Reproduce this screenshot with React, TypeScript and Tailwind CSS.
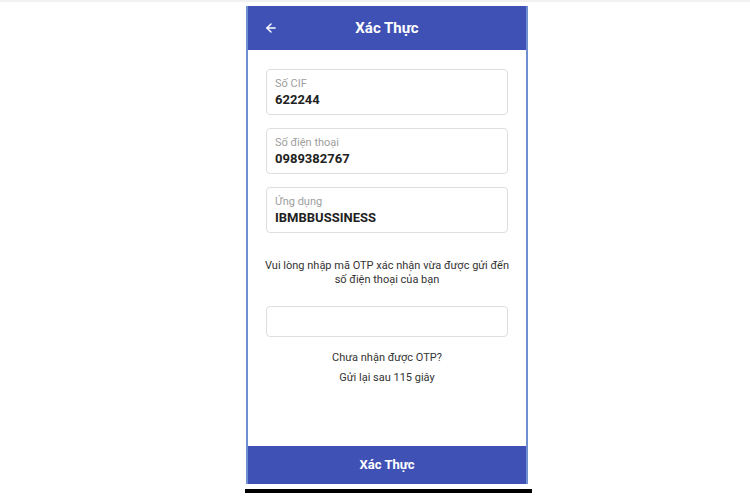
import { ArrowLeft } from "lucide-react";

const fields = [
  { label: "Số CIF", value: "622244" },
  { label: "Số điện thoại", value: "0989382767" },
  { label: "Ứng dụng", value: "IBMBBUSSINESS" },
];

export default function App() {
  return (
    <div className="h-[500px] w-[750px] overflow-hidden bg-white font-['Roboto',sans-serif]">
      <div className="h-[2px] bg-[#f1f1f1]" />
      {/* phone frame */}
      <div className="ml-[246px] mt-[4px] flex h-[478px] w-[282px] flex-col border-x-2 border-[#6f8fcf] bg-white">
        <header className="relative flex h-[44px] items-center justify-center bg-[#3f51b5]">
          <ArrowLeft className="absolute left-[16px] top-[15px] h-[14px] w-[14px] text-white" strokeWidth={2.5} />
          <h1 className="text-[15px] font-bold text-white">Xác Thực</h1>
        </header>

        <div className="flex flex-1 flex-col px-[18px] pt-[19px]">
          <div className="flex flex-col gap-[13px]">
            {fields.map((f) => (
              <div
                key={f.label}
                className="flex h-[46px] flex-col justify-center rounded-[4px] border border-[#dedede] px-[8px]"
              >
                <span className="text-[11px] leading-[14px] text-[#9e9e9e]">{f.label}</span>
                <span className="text-[13px] font-bold leading-[17px] text-[#222]">{f.value}</span>
              </div>
            ))}
          </div>

          <p className="-mx-[10px] mt-[26px] whitespace-nowrap text-center text-[11px] leading-[14px] text-[#333]">
            Vui lòng nhập mã OTP xác nhận vừa được gửi đến
            <br />
            số điện thoại của bạn
          </p>

          <div className="mt-[19px] h-[31px] rounded-[4px] border border-[#dedede]" />

          <p className="mt-[14px] text-center text-[11px] leading-[14px] text-[#333]">Chưa nhận được OTP?</p>
          <p className="mt-[6px] text-center text-[11px] leading-[14px] text-[#333]">Gửi lại sau 115 giây</p>
        </div>

        <button className="flex h-[38px] items-center justify-center bg-[#3f51b5] text-[13px] font-bold text-white">
          Xác Thực
        </button>
      </div>
      <div className="ml-[245px] mt-[5px] h-[4px] w-[287px] bg-black" />
    </div>
  );
}
